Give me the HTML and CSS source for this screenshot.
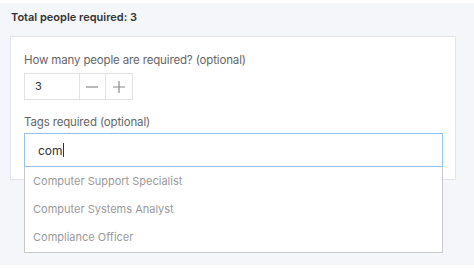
FILE: index.html
```html
<!DOCTYPE html>
<html>
<head>
	<meta http-equiv="Content-Type" content="text/html; charset=UTF-8">
	<title>people required</title>
	<link rel="stylesheet" href="styles.css">
</head>
<body>
<div class="page">
	<h3 class="total">Total people required: 3</h3>
	<div class="card">
		<p class="label">How many people are required? (optional)</p>
		<div class="spinner">
			<div class="count">3</div>
			<div class="step">
				<svg width="14" height="14" viewBox="0 0 14 14"><path d="M1 7h12" stroke="#8a8a8a" stroke-width="1.2"/></svg>
			</div>
			<div class="step">
				<svg width="14" height="14" viewBox="0 0 14 14"><path d="M1 7h12M7 1v12" stroke="#8a8a8a" stroke-width="1.2"/></svg>
			</div>
		</div>
		<p class="label">Tags required (optional)</p>
		<div class="tags">
			<div class="tagbox"><span class="typed">com</span><span class="caret"></span></div>
			<ul class="suggest">
				<li>Computer Support Specialist</li>
				<li>Computer Systems Analyst</li>
				<li>Compliance Officer</li>
			</ul>
		</div>
	</div>
</div>
</body>
</html>
```

FILE: styles.css
```css
body {
	margin: 0;
	background: #fff;
	font-family: "Inter", "Open Sans", sans-serif;
	color: #333;
}
.page {
	margin-top: 3px;
	height: 262px;
	background: #f5f6fa;
	padding: 0 18px 0 10px;
	box-sizing: border-box;
}
.total {
	margin: 0;
	padding: 5px 0 0 1px;
	height: 28px;
	box-sizing: border-box;
	font-size: 11px;
	line-height: 18px;
	font-weight: 600;
	color: #333;
}
.card {
	margin-top: 5px;
	background: #fff;
	border: 1px solid #e3e5ea;
	padding: 14px 13px 12px 13px;
}
.label {
	margin: 0 0 4px 0;
	font-size: 11.5px;
	letter-spacing: -0.15px;
	line-height: 18px;
	color: #666;
}
.spinner {
	display: flex;
	width: 109px;
	height: 27px;
	border: 1px solid #e2e2e2;
	box-sizing: border-box;
	margin-bottom: 13px;
}
.count {
	width: 55px;
	padding-left: 10px;
	box-sizing: border-box;
	font-size: 11px;
	line-height: 25px;
	color: #333;
	border-right: 1px solid #e2e2e2;
}
.step {
	width: 26px;
	display: flex;
	align-items: center;
	justify-content: center;
}
.step + .step {
	border-left: 1px solid #e2e2e2;
}
.tags {
	position: relative;
	width: 419px;
	margin-top: -2px;
}
.tagbox {
	height: 34px;
	box-sizing: border-box;
	border: 1px solid #93c2ee;
	padding: 0 13px;
	display: flex;
	align-items: center;
	font-size: 12px;
	color: #333;
}
.caret {
	display: inline-block;
	width: 1px;
	height: 14px;
	background: #333;
}
.suggest {
	position: absolute;
	left: 0;
	top: 34px;
	width: 419px;
	box-sizing: border-box;
	margin: 0;
	padding: 0 0 1px 0;
	list-style: none;
	background: #fff;
	border: 1px solid #c9c9cc;
	border-top: none;
}
.suggest li {
	height: 28px;
	line-height: 28px;
	padding-left: 8px;
	font-size: 11px;
	color: #9a9a9a;
}
```
